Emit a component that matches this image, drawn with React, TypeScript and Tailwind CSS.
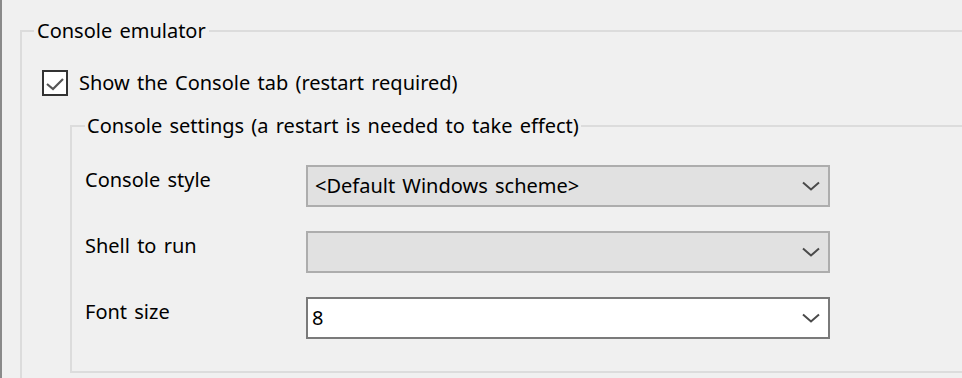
import React from 'react'

const Chevron = () => (
  <svg width="18" height="10" viewBox="0 0 18 10" className="shrink-0">
    <polyline points="1,1.5 9,8.5 17,1.5" fill="none" stroke="#4a4a4a" strokeWidth="2" />
  </svg>
)

interface ComboProps {
  value?: string
  editable?: boolean
}

const Combo: React.FC<ComboProps> = ({ value = '', editable }) => (
  <div
    className={`w-[524px] h-[42px] flex items-center justify-between pr-[8px] border-2 ${
      editable ? 'bg-white border-[#7a7a7a] pl-[4px]' : 'bg-[#e1e1e1] border-[#adadad] pl-[7px]'
    }`}
  >
    <span className="text-black">{value}</span>
    <Chevron />
  </div>
)

const rows = [
  { label: 'Console style', value: '<Default Windows scheme>' },
  { label: 'Shell to run', value: '' },
  { label: 'Font size', value: '8', editable: true }
]

export default function App() {
  return (
    <div
      className="w-[962px] h-[378px] overflow-hidden bg-[#f0f0f0] border-l-2 border-[#8a8a8a] text-[20px] text-black [word-spacing:2px]"
      style={{ fontFamily: '"Segoe UI", "Noto Sans", "Open Sans", sans-serif' }}
    >
      <fieldset className="ml-[18px] mt-[19px] w-[1000px] h-[400px] border-2 border-[#dcdcdc] px-0 pb-0">
        <legend className="ml-[12px] px-[3px] leading-[24px]">Console emulator</legend>

        <label className="flex items-center gap-[11px] ml-[20px] mt-[25px]">
          <span className="w-[26px] h-[26px] border-2 border-[#333333] bg-white flex items-center justify-center">
            <svg width="22" height="22" viewBox="0 0 22 22">
              <polyline points="3,12 9,17 19,7" fill="none" stroke="#555555" strokeWidth="2.2" />
            </svg>
          </span>
          <span>Show the Console tab (restart required)</span>
        </label>

        <fieldset className="ml-[48px] mt-[16px] w-[1000px] h-[259px] border-2 border-[#dcdcdc] px-0 pb-0">
          <legend className="ml-[13px] px-[2px] leading-[24px]">
            Console settings (a restart is needed to take effect)
          </legend>

          <div className="flex flex-col gap-[24px] mt-[27px] pl-[13px]">
            {rows.map(row => (
              <div key={row.label} className="flex items-start">
                <span className="w-[221px] mt-[2px] leading-[26px]">{row.label}</span>
                <Combo value={row.value} editable={row.editable} />
              </div>
            ))}
          </div>
        </fieldset>
      </fieldset>
    </div>
  )
}
